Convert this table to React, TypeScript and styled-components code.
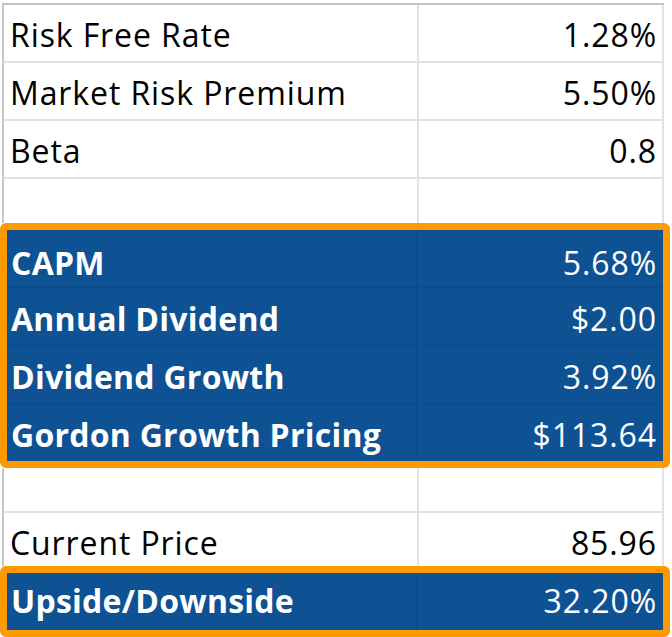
import styled, { createGlobalStyle } from "styled-components";
import React from "react";

const GlobalStyle = createGlobalStyle`
  html, body {
    margin: 0;
    padding: 0;
    background: #ffffff;
  }
  body {
    font-family: "Open Sans", "Liberation Sans", sans-serif;
  }
`;

interface Line {
  label: string;
  value: string;
}

const inputs: Line[] = [
  { label: "Risk Free Rate", value: "1.28%" },
  { label: "Market Risk Premium", value: "5.50%" },
  { label: "Beta", value: "0.8" },
];

const results: Line[] = [
  { label: "CAPM", value: "5.68%" },
  { label: "Annual Dividend", value: "$2.00" },
  { label: "Dividend Growth", value: "3.92%" },
  { label: "Gordon Growth Pricing", value: "$113.64" },
];

export default function App() {
  return (
    <>
      <GlobalStyle />
      <Sheet>
        {inputs.map((line, i) => (
          <Row key={line.label} $h={i === 0 ? 60 : 58} $top={i === 0} $shift={3}>
            <Cell>{line.label}</Cell>
            <Cell $right>{line.value}</Cell>
          </Row>
        ))}
        <Row $h={44} $noBottom>
          <Cell />
          <Cell />
        </Row>

        <Highlight>
          {results.map((line, i) => (
            <HRow key={line.label} $shift={i === 0 ? 8 : 3}>
              <HLabel>{line.label}</HLabel>
              <HValue>{line.value}</HValue>
            </HRow>
          ))}
        </Highlight>

        <Row $h={45}>
          <Cell />
          <Cell />
        </Row>
        <Row $h={53} $noBottom $shift={6}>
          <Cell>Current Price</Cell>
          <Cell $right>85.96</Cell>
        </Row>

        <Highlight>
          <HRow $shift={-3}>
            <HLabel>Upside/Downside</HLabel>
            <HValue>32.20%</HValue>
          </HRow>
        </Highlight>
      </Sheet>
    </>
  );
}

const Sheet = styled.div`
  width: 672px;
  height: 637px;
  box-sizing: border-box;
  padding-top: 3px;
  overflow: hidden;
  display: flex;
  flex-direction: column;
  background: #fff;
`;

const Row = styled.div<{ $h: number; $top?: boolean; $noBottom?: boolean; $shift?: number }>`
  display: grid;
  grid-template-columns: 415px 245px;
  width: 662px;
  margin-left: 2px;
  box-sizing: border-box;
  height: ${(p) => p.$h}px;
  flex: none;
  border-left: 2px solid #c6c6c6;
  border-top: ${(p) => (p.$top ? "2px solid #c2c2c2" : "none")};
  border-bottom: ${(p) => (p.$noBottom ? "none" : "2px solid #e2e2e2")};

  & > * {
    padding-top: ${(p) => p.$shift ?? 0}px;
  }
`;

const Cell = styled.div<{ $right?: boolean }>`
  display: flex;
  align-items: center;
  justify-content: ${(p) => (p.$right ? "flex-end" : "flex-start")};
  box-sizing: border-box;
  border-right: 2px solid #e2e2e2;
  padding-left: 6px;
  padding-right: 5px;
  font-size: 32px;
  letter-spacing: 0.9px;
  color: #000;
  white-space: nowrap;
`;

const Highlight = styled.div`
  width: 670px;
  flex: none;
  box-sizing: border-box;
  border: 7px solid #fd9a02;
  border-radius: 6px;
  background: #0e5294;
  display: flex;
  flex-direction: column;
`;

const HRow = styled.div<{ $shift: number }>`
  display: grid;
  grid-template-columns: 410px 246px;
  height: 58px;
  box-sizing: border-box;
  border-bottom: 1px solid #0c4a84;

  &:last-child {
    height: 57px;
    border-bottom: none;
  }

  & > * {
    padding-top: ${(p) => Math.max(p.$shift, 0)}px;
    padding-bottom: ${(p) => Math.max(-p.$shift, 0)}px;
  }
`;

const HLabel = styled.div`
  display: flex;
  align-items: center;
  box-sizing: border-box;
  border-right: 1px solid #0c4a84;
  padding-left: 4px;
  font-size: 32px;
  font-weight: 700;
  letter-spacing: 0.25px;
  color: #fff;
  white-space: nowrap;
`;

const HValue = styled.div`
  display: flex;
  align-items: center;
  justify-content: flex-end;
  box-sizing: border-box;
  padding-right: 6px;
  font-size: 32px;
  letter-spacing: 0.9px;
  color: #fff;
  white-space: nowrap;
`;
